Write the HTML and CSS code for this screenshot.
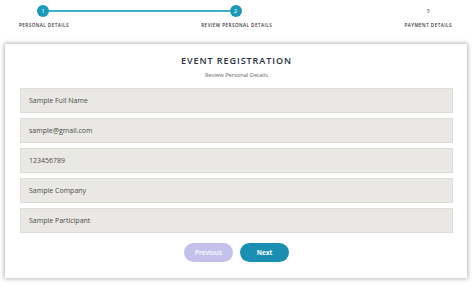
FILE: index.html
```html
<!DOCTYPE html>
<html lang="en">
<head>
  <meta charset="UTF-8" />
  <meta name="viewport" content="width=device-width, initial-scale=1.0"/>
  <title>Event Registration</title>
  <link rel="stylesheet" href="styles.css">
</head>
<body>
  <div class="stepper">
    <div class="step-track">
      <span class="dot active">1</span>
      <span class="bar done"></span>
      <span class="dot active">2</span>
      <span class="bar"></span>
      <span class="dot">3</span>
    </div>
    <div class="step-labels">
      <span>Personal Details</span>
      <span>Review Personal Details</span>
      <span>Payment Details</span>
    </div>
  </div>

  <div class="card">
    <h2>Event Registration</h2>
    <p class="sub">Review Personal Details</p>

    <div class="fields">
      <div class="field">Sample Full Name</div>
      <div class="field">sample@gmail.com</div>
      <div class="field">123456789</div>
      <div class="field">Sample Company</div>
      <div class="field">Sample Participant</div>
    </div>

    <div class="actions">
      <button class="btn prev">Previous</button>
      <button class="btn next">Next</button>
    </div>
  </div>
</body>
</html>
```

FILE: styles.css
```css
body {
  font-family: "Open Sans", sans-serif;
  margin: 0;
  background: #fff;
  width: 474px;
  height: 285px;
  overflow: hidden;
}

.stepper {
  padding-top: 5px;
}

.step-track {
  display: flex;
  align-items: center;
  padding: 0 40px 0 37px;
  height: 12px;
}

.dot {
  width: 12px;
  height: 12px;
  border-radius: 50%;
  font-size: 6px;
  line-height: 12px;
  text-align: center;
  color: #555;
}

.dot.active {
  background: #1a9ab8;
  color: #fff;
}

.bar {
  flex: 1;
  height: 2px;
}

.bar.done {
  background: #3fb0c9;
}

.step-labels {
  display: flex;
  justify-content: space-between;
  padding: 0 22px 0 19px;
  margin-top: 5px;
  font-size: 4.6px;
  font-weight: 600;
  letter-spacing: 0.45px;
  text-transform: uppercase;
  color: #333;
}

.card {
  margin: 16px 7px 0 5px;
  height: 234px;
  background: #fff;
  box-shadow: 0 0 4px 1px rgba(0, 0, 0, 0.28);
  padding: 0 14px 0 15px;
  box-sizing: border-box;
}

.card h2 {
  margin: 0;
  padding-top: 10px;
  text-align: center;
  font-size: 9px;
  font-weight: 600;
  letter-spacing: 0.95px;
  text-transform: uppercase;
  color: #27303c;
}

.sub {
  margin: 4px 0 0;
  text-align: center;
  font-size: 5.7px;
  color: #666;
}

.fields {
  margin-top: 9px;
  display: flex;
  flex-direction: column;
  gap: 5px;
}

.field {
  height: 25px;
  box-sizing: border-box;
  background: #e9e8e4;
  border: 1px solid #dddcd7;
  padding-left: 8px;
  display: flex;
  align-items: center;
  font-size: 7px;
  color: #4a4a4a;
}

.actions {
  display: flex;
  justify-content: center;
  gap: 7px;
  margin-top: 10px;
}

.btn {
  width: 49px;
  height: 19px;
  border: none;
  border-radius: 10px;
  color: #fff;
  font-family: "Open Sans", sans-serif;
  font-size: 6.5px;
  font-weight: 700;
  cursor: pointer;
}

.btn.prev {
  background: #c3c0ec;
  font-weight: 600;
}

.btn.next {
  background: #1a8fb2;
}
```
